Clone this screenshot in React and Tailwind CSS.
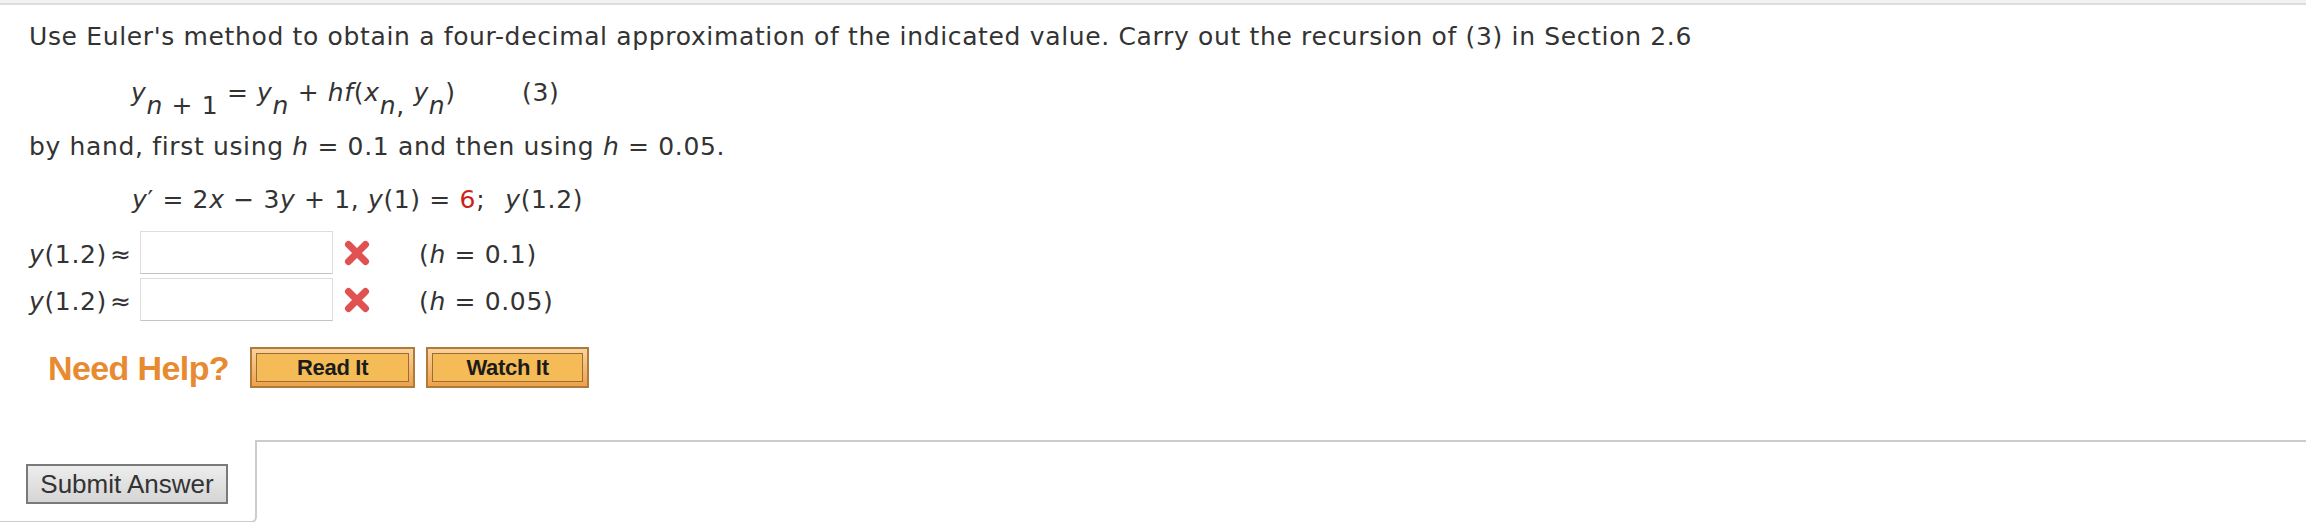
import React from 'react';

const font = { fontFamily: '"DejaVu Sans", Verdana, sans-serif' };
const arial = { fontFamily: '"Liberation Sans", Arial, sans-serif' };

function XMark() {
  return (
    <svg width="28" height="28" viewBox="0 0 28 28" className="shrink-0">
      <path d="M5.5 5.5 L22.5 22.5 M22.5 5.5 L5.5 22.5" stroke="#e05252" strokeWidth="7" strokeLinecap="round" />
    </svg>
  );
}

function AnswerRow({ hint }) {
  return (
    <div className="flex items-center h-[43px]">
      <span className="w-[111px] pt-[4px] whitespace-nowrap">
        <i>y</i>(1.2)<span className="ml-[3px]">≈</span>
      </span>
      <input
        type="text"
        className="w-[193px] h-[43px] border border-[#dedede] border-b-[#c4c4c4] bg-white outline-none"
      />
      <span className="ml-[10px]"><XMark /></span>
      <span className="ml-[48px] pt-[4px] whitespace-nowrap">
        (<i>h</i> = {hint})
      </span>
    </div>
  );
}

function HelpButton({ label, width }) {
  return (
    <div className={`${width} h-[41px] border-2 border-[#b17a3d] bg-gradient-to-b from-[#f9d39a] to-[#eda24a] p-[4px]`}>
      <div className="h-full border border-[#9b6c37] bg-[#f4bb56] flex items-center justify-center">
        <span className="font-bold text-[22px] leading-none text-[#1c1c1c] tracking-[-0.3px]" style={arial}>
          {label}
        </span>
      </div>
    </div>
  );
}

export default function App() {
  return (
    <div className="w-[2306px] h-[522px] bg-white overflow-hidden text-[25px] tracking-[0.65px] text-[#333]" style={font}>
      <div className="h-[3px] bg-[#f2f2f2]" />
      <div className="h-[2px] bg-[#dcdcdc]" />

      <div className="pl-[29px]">
        <p className="mt-[18px] h-[28px] leading-[28px] whitespace-nowrap">
          Use Euler's method to obtain a four-decimal approximation of the indicated value. Carry out the recursion of (3) in Section 2.6
        </p>

        <div className="mt-[28px] h-[28px] leading-[28px] pl-[102px] flex whitespace-nowrap">
          <span className="w-[391px]">
            <i>y</i>
            <span className="align-[-13px]"><i>n</i> + 1</span> = <i>y</i>
            <span className="align-[-13px]"><i>n</i></span> + <i>hf</i>(<i>x</i>
            <span className="align-[-13px]"><i>n</i>,</span> <i>y</i>
            <span className="align-[-13px]"><i>n</i></span>)
          </span>
          <span>(3)</span>
        </div>

        <p className="mt-[26px] h-[28px] leading-[28px] whitespace-nowrap">
          by hand, first using <i>h</i> = 0.1 and then using <i>h</i> = 0.05.
        </p>

        <p className="mt-[25px] h-[28px] leading-[28px] pl-[103px] whitespace-nowrap">
          <i>y</i>′ = 2<i>x</i> − 3<i>y</i> + 1, <i>y</i>(1) = <span className="text-[#cc1f1a]">6</span>;
          <span className="ml-[20px]"><i>y</i>(1.2)</span>
        </p>

        <div className="mt-[17px] flex flex-col gap-[4px]">
          <AnswerRow hint="0.1" />
          <AnswerRow hint="0.05" />
        </div>

        <div className="mt-[26px] h-[41px] flex items-center">
          <span
            className="ml-[19px] font-bold text-[34px] leading-none text-[#e88a2f] tracking-[-0.6px] whitespace-nowrap"
            style={arial}
          >
            Need Help?
          </span>
          <div className="ml-[21px] flex gap-[11px]">
            <HelpButton label="Read It" width="w-[165px]" />
            <HelpButton label="Watch It" width="w-[163px]" />
          </div>
        </div>
      </div>

      <div className="mt-[52px] flex h-[83px]">
        <div className="w-[257px] border-r-2 border-b-2 border-[#cccccc] rounded-br-[6px] pt-[24px] pl-[26px]">
          <button
            className="w-[202px] h-[40px] border-2 border-[#7a7a7a] bg-gradient-to-b from-[#ededed] to-[#d5d5d5] text-[26px] tracking-normal text-[#333] leading-none"
            style={arial}
          >
            Submit Answer
          </button>
        </div>
        <div className="flex-1 border-t-2 border-[#cccccc]" />
      </div>
    </div>
  );
}
